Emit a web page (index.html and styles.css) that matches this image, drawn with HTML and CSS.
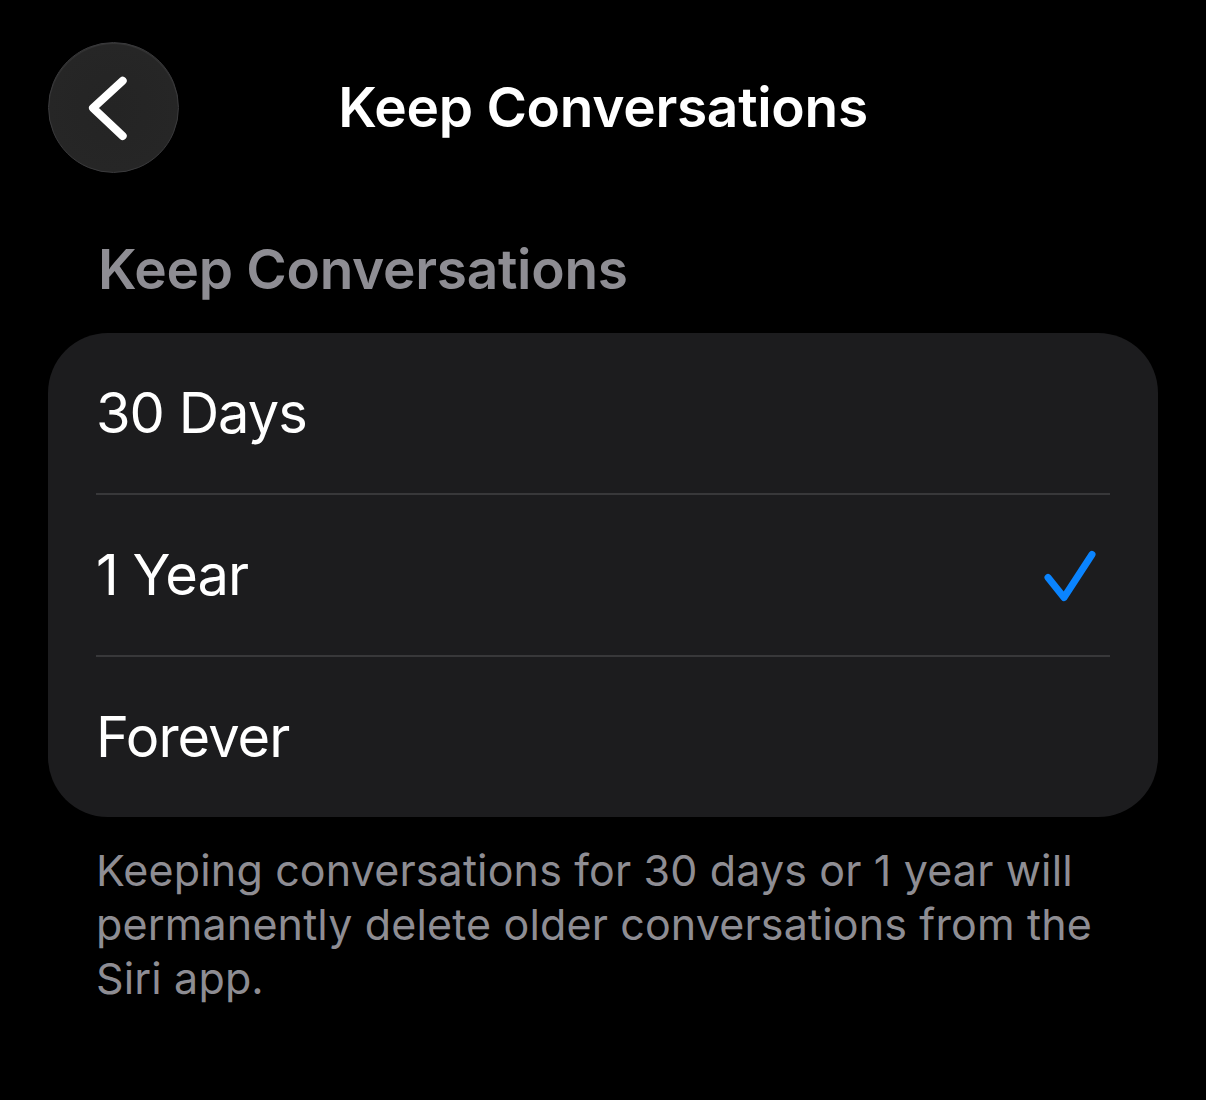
FILE: index.html
```html
<!DOCTYPE html>
<html lang="en">
<head>
<meta charset="utf-8">
<title>Keep Conversations</title>
<link rel="stylesheet" href="styles.css">
</head>
<body>
<div class="screen">
  <header class="nav">
    <button class="back" aria-label="Back">
      <svg width="131" height="131" viewBox="0 0 131 131">
        <path d="M74.7 38.7 L45 66 L74.7 94" fill="none" stroke="#fff" stroke-width="8" stroke-linecap="round" stroke-linejoin="round"/>
      </svg>
    </button>
    <h1 class="nav-title">Keep Conversations</h1>
  </header>

  <section class="group">
    <h2 class="group-header">Keep Conversations</h2>
    <ul class="list">
      <li class="row"><span class="row-label">30 Days</span></li>
      <li class="row"><span class="row-label">1 Year</span>
        <svg class="check" width="60" height="60" viewBox="0 0 60 60">
          <path d="M8 31.5 L24 51.5 L52 8.5" fill="none" stroke="#0a84ff" stroke-width="7" stroke-linecap="round" stroke-linejoin="round"/>
        </svg>
      </li>
      <li class="row"><span class="row-label">Forever</span></li>
    </ul>
    <p class="group-footer">Keeping conversations for 30 days or 1 year will permanently delete older conversations from the Siri app.</p>
  </section>
</div>
</body>
</html>
```
FILE: styles.css
```css
html, body {
  margin: 0;
  padding: 0;
  background: #000;
}

body {
  font-family: Inter, "Noto Sans", "Liberation Sans", sans-serif;
  color: #fff;
  width: 1206px;
  height: 1100px;
  overflow: hidden;
}

.screen {
  padding: 42px 48px 0 48px;
}

/* top navigation: round back button + centred title */
.nav {
  position: relative;
  height: 131px;
  display: flex;
  align-items: center;
  justify-content: center;
}

.back {
  position: absolute;
  left: 0;
  top: 0;
  width: 131px;
  height: 131px;
  padding: 0;
  border-radius: 50%;
  border: 1.5px solid #3b3b3d;
  background: radial-gradient(circle at 50% 50%, #242424 0%, #262626 70%, #2a2a2a 100%);
  box-shadow: 0 2px 6px rgba(0, 0, 0, 0.6), inset 0 1px 1px rgba(255, 255, 255, 0.08);
  display: flex;
  align-items: center;
  justify-content: center;
}

.back svg {
  display: block;
  position: absolute;
  left: -1.5px;
  top: -1.5px;
}

.nav-title {
  margin: 0;
  font-size: 55px;
  font-weight: 600;
  letter-spacing: -0.3px;
  line-height: 1;
}

/* grouped list */
.group {
  margin-top: 66px;
}

.group-header {
  margin: 0 0 34px 50px;
  font-size: 55px;
  font-weight: 600;
  letter-spacing: -0.3px;
  color: #8e8d93;
  line-height: 60px;
}

.list {
  list-style: none;
  margin: 0;
  padding: 0;
  background: #1c1c1e;
  border-radius: 60px;
  overflow: hidden;
}

.row {
  position: relative;
  height: 160px;
  margin: 0 48px 0 48px;
  display: flex;
  align-items: center;
  justify-content: space-between;
  border-bottom: 2px solid #38383a;
}

.row:last-child {
  border-bottom: none;
}

.row-label {
  font-size: 56px;
  font-weight: 400;
  letter-spacing: -1px;
  line-height: 1;
}

.check {
  display: block;
  margin-right: 10px;
  margin-top: 2px;
}

.group-footer {
  margin: 26px 46px 0 48px;
  font-size: 43px;
  line-height: 54px;
  color: #8e8d93;
  letter-spacing: 0.15px;
}
```
